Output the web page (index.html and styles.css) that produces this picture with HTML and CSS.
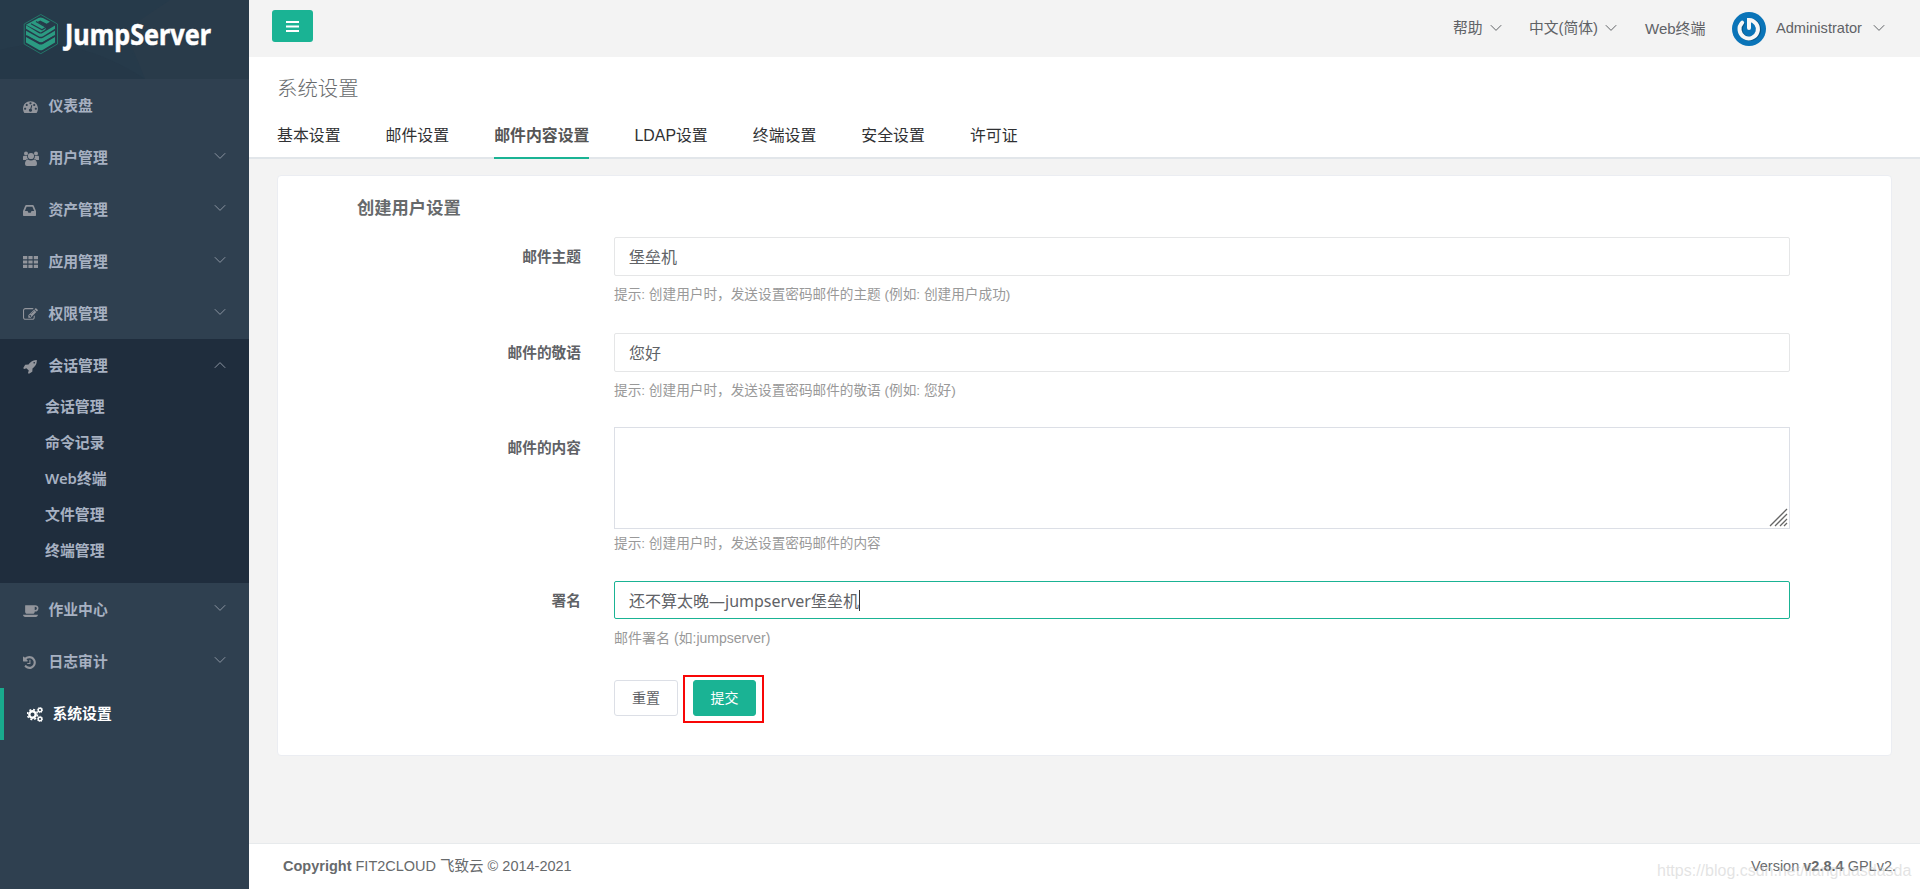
FILE: index.html
```html
<!DOCTYPE html>
<html lang="zh-CN">
<head>
<meta charset="utf-8">
<title>JumpServer</title>
<link rel="stylesheet" href="styles.css">
</head>
<body>
<svg class="defs" width="0" height="0"><defs>
<symbol id="down" viewBox="0 0 12 8"><path d="M.8 1.2 6 6.4l5.200-5.200" fill="none" stroke="currentColor"/></symbol>
</defs></svg>
<div class="app">
<aside class="sidebar">
  <div class="logo">
    <svg class="logo-bg" width="249" height="79" viewBox="0 0 249 79"><path d="M0 0h170L120 35l30 44H0z" fill="#263a4a"/><path d="M125 30 170 0h79v79H145z" fill="#293b4a"/><path d="M0 50q70-20 145 29H0z" fill="#253848"/></svg>
    <svg class="logo-art" width="249" height="79" viewBox="0 0 249 79">
      <path d="M40.800 14.500 57.500 24v20L40.800 53.700 24.200 44V24z" fill="none" stroke="#237669" stroke-width="1"/>
      <g fill="#2b9b82"><path d="M26 24.800 38.500 18q2.200-1 4.400 0L50 21.800l-3.400 2-6.500-3.200-2.600 1.400 7.500 4.300q2 1.700 0 3.700l-4.300 2.500z"/><path d="m32.500 24.400 3-1.700 8 4.500q1 1 0 2l-2.500 1.500-2-1 1.500-1.500zM44.500 31.700 55 25.500v3.300L43 36.200q-2.200 1.200-4.400 0L26 28.700v-3.400l12.600 7.600q2 1 4 0z"/><path d="m26 30.700 12.600 7q2.200 1.200 4.400 0l12-7v4.200l-12 7q-2.200 1.200-4.400 0l-12.600-7zM26 37l12.600 7q2.200 1.200 4.400 0l12-7v5.500L43 49.700q-2.200 1.200-4.400 0L26 42.500z"/></g>
      <path d="m27 36 12 6.600q2 1 4 0L54.500 36" fill="none" stroke="#263a4a" stroke-width="1.200"/>
      <path d="m36 21.400 10 5.800-4 2.600-11-6" fill="none" stroke="#263a4a" stroke-width="1.200"/>
      <text x="65" y="45" textLength="146" lengthAdjust="spacingAndGlyphs" class="brand">JumpServer</text>
    </svg>
  </div>
  <nav>
    <a class="item"><svg class="ico" viewBox="0 0 1920 1792"><path fill-rule="evenodd" d="M384 1152q0-53-37.500-90.500t-90.500-37.500-90.500 37.500-37.500 90.500 37.500 90.500 90.500 37.500 90.500-37.500 37.500-90.500zm192-448q0-53-37.500-90.500t-90.500-37.500-90.500 37.500-37.500 90.500 37.500 90.500 90.500 37.500 90.500-37.500 37.500-90.500zm428 481l101-382q6-26-7.500-48.500t-38.500-29.500-48 6.500-30 39.500l-101 382q-60 5-107 43.500t-63 98.500q-20 77 20 146t117 89 146-20 89-117q16-60-6-117t-72-91zm660-33q0-53-37.500-90.500t-90.500-37.500-90.500 37.500-37.500 90.500 37.500 90.500 90.500 37.500 90.500-37.500 37.500-90.500zm-640-640q0-53-37.500-90.500t-90.500-37.500-90.500 37.500-37.500 90.500 37.500 90.500 90.500 37.500 90.500-37.500 37.500-90.500zm448 192q0-53-37.500-90.500t-90.500-37.500-90.500 37.500-37.500 90.500 37.500 90.500 90.500 37.500 90.500-37.500 37.500-90.500zm320 448q0 261-141 483-19 29-54 29h-1402q-35 0-54-29-141-221-141-483 0-182 71-348t191-286 286-191 348-71 348 71 286 191 191 286 71 348z"/></svg><span>仪表盘</span></a>
    <a class="item"><svg class="ico" viewBox="0 0 16 15"><circle cx="3" cy="2.500" r="2"/><circle cx="13" cy="2.500" r="2"/><circle cx="8" cy="5" r="3.100"/><path d="M0 8.500V6q0-1.500 1.300-1.300 1.800.7 2.800.2Q4 7 5 8q-1.500 0-2.200 1H1Q0 9.200 0 8.500zM16 8.500V6q0-1.500-1.300-1.300-1.800.7-2.800.2Q12 7 11 8q1.500 0 2.200 1H15q1 .2 1-.5zM4.800 8.400q3.200 2 6.400 0Q14 9 14 13q0 2-2 2H4q-2 0-2-2 0-4 2.800-4.600z"/></svg><span>用户管理</span><svg class="arr"><use href="#down"/></svg></a>
    <a class="item"><svg class="ico" viewBox="0 0 16 15"><path fill-rule="evenodd" d="M3.200 2h6.600q.7 0 1 .7L13 8v4.300q0 .7-.7.700H.7Q0 13 0 12.300V8l2.200-5.300q.3-.7 1-.7zm.4 1.700L1.900 8h2.700l.8 1.700h2.300L8.500 8h2.700L9.400 3.700z"/></svg><span>资产管理</span><svg class="arr"><use href="#down"/></svg></a>
    <a class="item"><svg class="ico" viewBox="0 0 16 15"><path d="M0 1h4.300v3.300H0zm5.400 0h4.200v3.300H5.400zm5.400 0H15v3.300h-4.200zM0 5.400h4.300v3.200H0zm5.400 0h4.200v3.200H5.400zm5.400 0H15v3.200h-4.200zM0 9.700h4.300V13H0zm5.400 0h4.200V13H5.400zm5.400 0H15V13h-4.200z"/></svg><span>应用管理</span><svg class="arr"><use href="#down"/></svg></a>
    <a class="item"><svg class="ico" viewBox="0 0 1920 1792"><path fill-rule="evenodd" d="M888 1184l116-116-152-152-116 116v56h96v96h56zm440-720q-16-16-33 1l-350 350q-17 17-1 33t33-1l350-350q17-17 1-33zm80 594v190q0 119-84.500 203.500t-203.500 84.500h-832q-119 0-203.500-84.500t-84.500-203.500v-832q0-119 84.500-203.500t203.500-84.500h832q63 0 117 25 15 7 18 23 3 17-9 29l-49 49q-14 14-32 8-23-6-45-6h-832q-66 0-113 47t-47 113v832q0 66 47 113t113 47h832q66 0 113-47t47-113v-126q0-13 9-22l64-64q15-15 35-7t20 29zm-96-738l288 288-672 672h-288v-288zm444 132l-92 92-288-288 92-92q28-28 68-28t68 28l152 152q28 28 28 68t-28 68z"/></svg><span>权限管理</span><svg class="arr"><use href="#down"/></svg></a>
    <div class="group">
      <a class="item"><svg class="ico" viewBox="0 0 1920 1792"><path fill-rule="evenodd" d="M1440 448q0-40-28-68t-68-28-68 28-28 68 28 68 68 28 68-28 28-68zm224-288q0 249-75.500 430.500t-253.500 360.500q-81 80-195 176l-20 379q-2 16-16 26l-384 224q-7 4-16 4-12 0-23-9l-64-64q-13-14-8-32l85-276-281-281-276 85q-3 1-9 1-14 0-23-9l-64-64q-17-19-5-39l224-384q10-14 26-16l379-20q96-114 176-195 188-187 358-258t431-71q14 0 24 9.500t10 22.500z"/></svg><span>会话管理</span><svg class="arr up"><use href="#down"/></svg></a>
      <a class="sub">会话管理</a><a class="sub">命令记录</a><a class="sub">Web终端</a><a class="sub">文件管理</a><a class="sub">终端管理</a>
    </div>
    <a class="item"><svg class="ico" viewBox="0 0 1920 1792"><path fill-rule="evenodd" d="M1664 640q0-80-56-136t-136-56h-64v384h64q80 0 136-56t56-136zm-1664 768h1792q0 106-75 181t-181 75h-1280q-106 0-181-75t-75-181zm1856-768q0 159-112.500 271.500t-271.500 112.500h-64v32q0 92-66 158t-158 66h-704q-92 0-158-66t-66-158v-736q0-26 19-45t45-19h1152q159 0 271.500 112.500t112.500 271.500z"/></svg><span>作业中心</span><svg class="arr"><use href="#down"/></svg></a>
    <a class="item"><svg class="ico" viewBox="128 0 1920 1792"><path d="M1664 896q0 156-61 298t-164 245-245 164-298 61q-172 0-327-72.500t-264-204.500q-7-10-6.500-22.500t8.500-20.500l137-138q10-9 25-9 16 2 23 12 73 95 179 147t225 52q104 0 198.500-40.500t163.500-109.500 109.500-163.500 40.500-198.500-40.500-198.500-109.500-163.500-163.500-109.500-198.500-40.500q-98 0-188 35.500t-160 101.500l137 138q31 30 14 69-17 40-59 40h-448q-26 0-45-19t-19-45v-448q0-42 40-59 39-17 69 14l130 129q107-101 244.500-156.500t284.500-55.500q156 0 298 61t245 164 164 245 61 298zm-640-288v448q0 14-9 23t-23 9h-320q-14 0-23-9t-9-23v-64q0-14 9-23t23-9h224v-352q0-14 9-23t23-9h64q14 0 23 9t9 23z"/></svg><span>日志审计</span><svg class="arr"><use href="#down"/></svg></a>
    <a class="item active"><svg class="ico" viewBox="0 0 16 15"><g fill="none" stroke="#fff"><circle cx="5.500" cy="7.500" r="3.200" stroke-width="2.400"/><circle cx="5.500" cy="7.500" r="5" stroke-width="1.500" stroke-dasharray="2 1.927"/><circle cx="13" cy="3" r="1.800" stroke-width="1.400"/><circle cx="13" cy="3" r="2.700" stroke-width=".9" stroke-dasharray="1.100 1.020"/><circle cx="13" cy="12" r="1.800" stroke-width="1.400"/><circle cx="13" cy="12" r="2.700" stroke-width=".9" stroke-dasharray="1.100 1.020"/></g></svg><span>系统设置</span></a>
  </nav>
</aside>
<main class="main">
  <header class="top">
    <button class="burger"><svg width="13" height="11" viewBox="0 0 13 11"><path d="M0 1h13M0 5.500h13M0 10h13" stroke="#fff" stroke-width="1.900"/></svg></button>
    <div class="tools">
      <span class="tool help">帮助<svg class="chev"><use href="#down"/></svg></span>
      <span class="tool lang">中文(简体)<svg class="chev"><use href="#down"/></svg></span>
      <span class="tool web">Web终端</span>
      <svg class="avatar" width="34" height="34" viewBox="0 0 34 34"><circle cx="17" cy="17" r="17" fill="#0a74b8"/><g fill="none" stroke-linecap="round"><path d="M10.200 10.700a9.200 9.200 0 1 0 11.800-1.800" stroke="#075789" stroke-width="4.500" transform="translate(.5 .8)"/><path d="M10.200 10.700A9.200 9.200 0 1 0 17 8v8" stroke="#f7f7f7" stroke-width="4"/></g></svg>
      <span class="tool admin">Administrator<svg class="chev"><use href="#down"/></svg></span>
    </div>
  </header>
  <section class="heading">
    <h1>系统设置</h1>
    <div class="tabs"><a>基本设置</a><a>邮件设置</a><a class="on">邮件内容设置</a><a>LDAP设置</a><a>终端设置</a><a>安全设置</a><a>许可证</a></div>
  </section>
  <section class="content">
    <form class="card">
      <h2>创建用户设置</h2>
      <div class="row"><label>邮件主题</label><div class="field"><div class="input">堡垒机</div><p>提示: 创建用户时，发送设置密码邮件的主题 (例如: 创建用户成功)</p></div></div>
      <div class="row"><label>邮件的敬语</label><div class="field"><div class="input">您好</div><p>提示: 创建用户时，发送设置密码邮件的敬语 (例如: 您好)</p></div></div>
      <div class="row area-row"><label>邮件的内容</label><div class="field"><div class="area"><svg width="20" height="20" viewBox="0 0 20 20"><path d="M1 18 18 1M6 18 18 6M11 18l7-7M15 18l3-3" stroke="#666" stroke-width="1.300"/></svg></div><p>提示: 创建用户时，发送设置密码邮件的内容</p></div></div>
      <div class="row"><label>署名</label><div class="field"><div class="input focus"><span class="sign">还不算太晚<span class="dash">—</span>jumpserver堡垒机</span><i class="caret"></i></div><p class="sign-hint">邮件署名 (如:jumpserver)</p></div></div>
      <div class="actions"><button type="button" class="btn">重置</button><span class="mark"><button type="button" class="btn primary">提交</button></span></div>
    </form>
  </section>
  <footer><div class="copy"><b>Copyright</b> FIT2CLOUD 飞致云 © 2014-2021</div><div class="ver">Version <b>v2.8.4</b> GPLv2.</div></footer>
</main>
</div>
<div class="watermark">https://blog.csdn.net/liangluasdasda</div>
</body>
</html>
```

FILE: styles.css
```css
* { box-sizing: border-box; }
body { margin: 0; font: 14px/20px "Liberation Sans", "Noto Sans CJK SC", sans-serif; color: #676a6c; background: #f3f3f3; overflow: hidden; }
h1, h2, p { margin: 0; }
button { font: inherit; padding: 0; }
.defs { display: none; }
.app { display: flex; height: 889px; }

.sidebar { width: 249px; flex: none; background: #2f4050; }
.logo { height: 79px; display: grid; background: #263a4a; }
.logo svg { grid-area: 1 / 1; }
.brand { font: 700 28px "Noto Sans", sans-serif; fill: #fff; stroke: #fff; stroke-width: .5px; }
.item { display: flex; align-items: center; height: 52.1px; padding: 0 23px; color: #a7b1c2; font-size: 14.8px; font-weight: 600; }
.item .ico { width: 16px; height: 15px; margin-right: 10px; margin-top: 2px; margin-left: -.5px; fill: #92959c; }
.item span { position: relative; top: .5px; }
.arr { width: 12px; height: 8px; margin: -3px 0 0 auto; color: #8b94a1; }
.arr.up { transform: rotate(180deg); margin-top: -1px; }
.group { background: #1f2d3d; height: 244px; }
.sub { display: block; height: 36.200px; padding-left: 45px; color: #a7b1c2; font: 600 14.900px/28px "Noto Sans", "Noto Sans CJK SC", sans-serif; }
.active { border-left: 4px solid #19aa8d; color: #fff; }
.active .ico { fill: #fff; margin-top: 1px; }

.main { flex: 1; display: flex; flex-direction: column; min-width: 0; }
.top { height: 57px; display: flex; justify-content: space-between; padding: 10px 35px 0 23px; }
.burger { width: 41px; height: 32px; border: 0; border-radius: 3px; background: #1ab394; display: grid; place-items: center; }
.tools { display: flex; height: 36px; align-items: center; font-size: 14.800px; color: #606266; }
.tool { display: flex; align-items: center; white-space: nowrap; }
.chev { width: 12px; height: 8px; color: #606266; }
.help { width: 76px; }
.lang { width: 116px; }
.help .chev { margin-left: 7px; }
.lang .chev { margin-left: 7px; }
.web { width: 87px; font-size: 15px; padding-top: 1px; }
.avatar { margin: 2px 10px 0 0; }
.admin { width: 109px; font-size: 14.600px; justify-content: space-between; }

.heading { height: 102px; background: #fff; border-bottom: 2px solid #e2e6ea; padding: 19px 28px 0; }
h1 { font-size: 20.400px; line-height: 27px; font-weight: 300; }
.tabs { display: flex; gap: 45px; margin-top: 12px; height: 44px; font-size: 15.900px; line-height: 42px; color: #303133; }
.tabs a { white-space: nowrap; }
.tabs .on { font-weight: 700; color: #555; border-bottom: 2px solid #1ab394; }

.content { flex: 1; padding: 16px 28px 0; }
.card { height: 581px; background: #fff; border: 1px solid #ebedf2; border-radius: 4px; padding: 19px 100px 0 79px; }
h2 { font-size: 17.300px; line-height: 26px; font-weight: 700; }
.row { display: flex; height: 96px; }
.row:nth-of-type(1) { margin-top: 16px; }
.area-row { height: 154px; margin-top: -2px; }
label { width: 224px; text-align: right; line-height: 40px; font-size: 14.700px; font-weight: 700; color: #606266; }
.area-row label { line-height: 43px; }
.field { width: 1176px; margin-left: 33px; }
.input { display: flex; align-items: center; height: 39px; border: 1px solid #e5e6e7; border-radius: 2px; padding: 1px 14px 0; font: 16px/22px "Noto Sans", "Noto Sans CJK SC", sans-serif; color: #606266; }
.input.focus { height: 38px; border-color: #1ab394; }
.caret { width: 1px; height: 21px; background: #333; }
.field p { margin-top: 8px; font-size: 13.650px; line-height: 22px; color: #999; }
.area { height: 102px; border: 1px solid #dcdfe6; display: flex; justify-content: flex-end; align-items: flex-end; }
.area + p { margin-top: 4px; }
.field .sign-hint { font-size: 14px; }
.actions { display: flex; padding-left: 257px; margin-top: -2px; }
.btn { width: 64px; height: 36px; margin-top: 5px; border: 1px solid #dcdfe6; border-radius: 3px; background: #fff; color: #606266; }
.mark { display: flex; width: 81px; height: 48px; margin-left: 5px; border: 2px solid #f80606; padding-left: 8px; }
.primary { width: 63px; background: #1ab394; border-color: #1ab394; color: #fff; margin-top: 3px; }

footer { height: 46px; border-top: 1px solid #e7eaec; background: #fff; display: flex; justify-content: space-between; padding: 12px 24px 0 34px; font-size: 14.500px; }
.watermark { position: absolute; left: 1657px; top: 861px; width: 254px; white-space: nowrap; font-size: 16px; color: rgba(200, 200, 200, .5); }
```
